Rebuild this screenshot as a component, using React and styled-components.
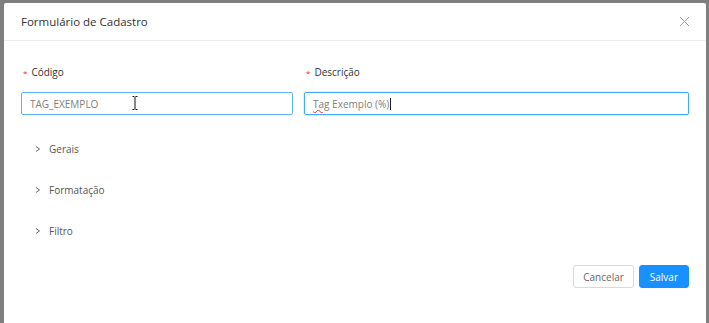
import styled, { createGlobalStyle } from "styled-components";

const Global = createGlobalStyle`
  html, body {
    margin: 0;
    padding: 0;
    height: 100%;
  }
  body {
    background: #7f7f7f;
    font-family: "Open Sans", "Noto Sans", sans-serif;
    overflow: hidden;
  }
  #root {
    height: 100%;
  }
`;

const Overlay = styled.div`
  height: 100%;
  box-sizing: border-box;
  padding: 3px 3px 0 4px;
  display: flex;
`;

const Modal = styled.div`
  flex: 1;
  background: #fff;
  border-radius: 2px 2px 0 0;
  display: flex;
  flex-direction: column;
`;

const Header = styled.div`
  height: 38px;
  box-sizing: border-box;
  padding: 0 17px;
  border-bottom: 1px solid #ececec;
  display: flex;
  align-items: center;
  justify-content: space-between;
`;

const Title = styled.div`
  font-size: 11.5px;
  color: #333;
`;

const Close = styled.button`
  border: none;
  background: none;
  padding: 0;
  width: 14px;
  height: 14px;
  display: flex;
  align-items: center;
  justify-content: center;
  margin-right: -2px;
  cursor: pointer;
`;

const Body = styled.div`
  padding: 21px 17px 0;
`;

const Fields = styled.div`
  display: grid;
  grid-template-columns: 272px 1fr;
  column-gap: 11px;
`;

const Field = styled.div`
  display: flex;
  flex-direction: column;
`;

const Label = styled.label`
  font-size: 10px;
  color: #333;
  height: 20px;
  display: flex;
  align-items: center;
  margin-bottom: 10px;
  &::before {
    content: "*";
    color: #f5222d;
    margin: 1px 4px 0 2px;
    font-size: 8px;
  }
`;

const InputWrap = styled.div`
  position: relative;
`;

const Input = styled.div`
  height: 23px;
  box-sizing: border-box;
  border: 1px solid ${(p) => (p.$focused ? "#40a9ff" : "#5cb3ff")};
  border-radius: 2px;
  padding: 0 8px;
  font-size: 10px;
  color: #808080;
  display: flex;
  align-items: center;
  box-shadow: ${(p) => (p.$focused ? "0 0 0 1px rgba(24,144,255,0.12)" : "none")};
`;

const Misspelled = styled.span`
  text-decoration: underline wavy #e53935;
  text-decoration-thickness: 1px;
  text-underline-offset: 1px;
`;

const Caret = styled.span`
  display: inline-block;
  width: 1px;
  height: 12px;
  background: #222;
  margin-left: 1px;
`;

const IBeam = styled.svg`
  position: absolute;
  left: 111px;
  top: 4px;
`;

const Panels = styled.div`
  margin-top: 13px;
  display: flex;
  flex-direction: column;
`;

const Panel = styled.div`
  height: 41px;
  display: flex;
  align-items: center;
  padding-left: 14px;
  font-size: 10px;
  color: #555;
  gap: 8px;
`;

const Footer = styled.div`
  margin-top: 14px;
  padding: 0 17px;
  display: flex;
  justify-content: flex-end;
  gap: 5px;
`;

const Button = styled.button`
  height: 23px;
  box-sizing: border-box;
  border-radius: 3px;
  padding: 0 ${(p) => (p.$primary ? "10px" : "9px")};
  font-family: inherit;
  font-size: 10px;
  border: 1px solid ${(p) => (p.$primary ? "#1890ff" : "#d9d9d9")};
  background: ${(p) => (p.$primary ? "#1890ff" : "#fff")};
  color: ${(p) => (p.$primary ? "#fff" : "#666")};
  cursor: pointer;
`;

const Chevron = () => (
  <svg width="6" height="8" viewBox="0 0 6 8">
    <path d="M1 1.5 L4.5 4 L1 6.5" fill="none" stroke="#666" strokeWidth="1" />
  </svg>
);

export default function App() {
  return (
    <>
      <Global />
      <Overlay>
        <Modal>
          <Header>
            <Title>Formulário de Cadastro</Title>
            <Close aria-label="Fechar">
              <svg width="11" height="11" viewBox="0 0 11 11">
                <path d="M1 1 L10 10 M10 1 L1 10" stroke="#999" strokeWidth="1" />
              </svg>
            </Close>
          </Header>
          <Body>
            <Fields>
              <Field>
                <Label>Código</Label>
                <InputWrap>
                  <Input>TAG_EXEMPLO</Input>
                  <IBeam width="6" height="14" viewBox="0 0 6 14">
                    <path
                      d="M0.5 0.5 H2.5 M3.5 0.5 H5.5 M3 1 V13 M0.5 13.5 H2.5 M3.5 13.5 H5.5"
                      stroke="#111"
                      strokeWidth="1"
                      fill="none"
                    />
                  </IBeam>
                </InputWrap>
              </Field>
              <Field>
                <Label>Descrição</Label>
                <Input $focused>
                  <Misspelled>Tag</Misspelled>&nbsp;Exemplo (%)
                  <Caret />
                </Input>
              </Field>
            </Fields>
            <Panels>
              {["Gerais", "Formatação", "Filtro"].map((t) => (
                <Panel key={t}>
                  <Chevron />
                  {t}
                </Panel>
              ))}
            </Panels>
          </Body>
          <Footer>
            <Button>Cancelar</Button>
            <Button $primary>Salvar</Button>
          </Footer>
        </Modal>
      </Overlay>
    </>
  );
}
